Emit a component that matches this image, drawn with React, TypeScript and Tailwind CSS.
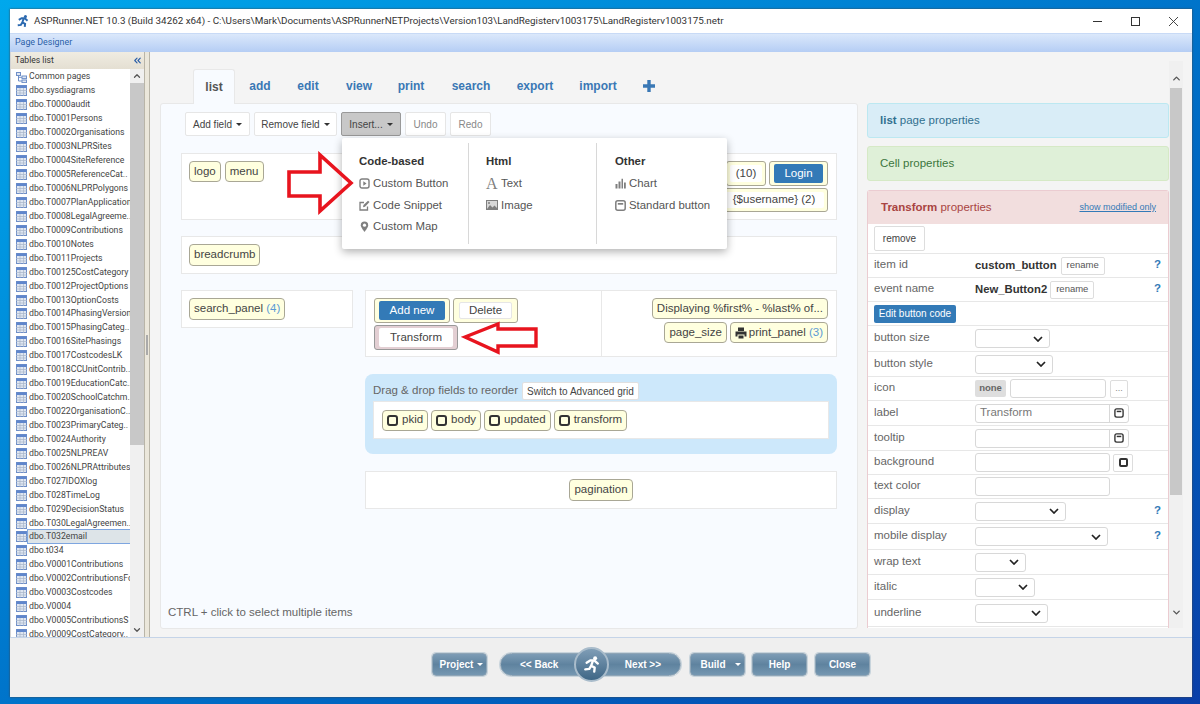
import React from "react";
import { ChevronUp, ChevronDown, ChevronsLeft } from "lucide-react";

const tables = ["dbo.sysdiagrams","dbo.T0000audit","dbo.T0001Persons","dbo.T0002Organisations","dbo.T0003NLPRSites","dbo.T0004SiteReference","dbo.T0005ReferenceCat..","dbo.T0006NLPRPolygons","dbo.T0007PlanApplication","dbo.T0008LegalAgreeme..","dbo.T0009Contributions","dbo.T0010Notes","dbo.T0011Projects","dbo.T00125CostCategory","dbo.T0012ProjectOptions","dbo.T0013OptionCosts","dbo.T0014PhasingVersion","dbo.T0015PhasingCateg..","dbo.T0016SitePhasings","dbo.T0017CostcodesLK","dbo.T0018CCUnitContrib..","dbo.T0019EducationCatc..","dbo.T0020SchoolCatchm..","dbo.T0022OrganisationC..","dbo.T0023PrimaryCateg..","dbo.T0024Authority","dbo.T0025NLPREAV","dbo.T0026NLPRAttributes","dbo.T027IDOXlog","dbo.T028TimeLog","dbo.T029DecisionStatus","dbo.T030LegalAgreemen..","dbo.T032email","dbo.t034","dbo.V0001Contributions","dbo.V0002ContributionsFo","dbo.V0003Costcodes","dbo.V0004","dbo.V0005ContributionsS","dbo.V0009CostCategory.."];

const Runner = ({ className = "", fill = "#fff" }: { className?: string; fill?: string }) => (
  <svg viewBox="0 0 20 20" className={className}>
    <circle cx="13.5" cy="3.5" r="2.2" fill={fill} />
    <path d="M4 8.5 L8 6 L12.5 6 L16.5 9.5 M11 6.5 L9 12 L13 14 L12.5 18.5 M9 12 L7 15.5 L2.5 16" stroke={fill} strokeWidth="2.6" fill="none" strokeLinejoin="round" strokeLinecap="round" />
  </svg>
);

const TableIcon = () => (
  <svg viewBox="0 0 11 11" className="w-[11px] h-[11px] shrink-0">
    <rect x="0.5" y="0.5" width="10" height="10" fill="#dfe6f2" stroke="#6f8fc8" />
    <rect x="0.5" y="0.5" width="10" height="2.5" fill="#5f86cc" />
    <path d="M0 5.5H11M0 8H11M4 3V11M7.5 3V11" stroke="#a8b4c8" strokeWidth="0.7" />
  </svg>
);

const Chip = ({ children }: { children: React.ReactNode }) => (
  <span className="inline-flex items-center h-[21px] px-1 rounded-[4px] border border-[#a9a795] bg-[#ffffdf] text-[11.5px] text-[#444] whitespace-nowrap">{children}</span>
);

const TallChip = ({ children }: { children: React.ReactNode }) => (
  <span className="inline-flex items-center h-[22px] px-1 rounded-[4px] border border-[#a9a795] bg-[#ffffdf] text-[11.5px] text-[#444] whitespace-nowrap">{children}</span>
);

const FieldIcon = () => <span className="inline-block w-[11px] h-[11px] rounded-[3px] border-2 border-[#333] mr-[4px]" />;

const Toolbar = ({ children, muted, w }: { children: React.ReactNode; muted?: boolean; w: string }) => (
  <button className={`${w} h-6 rounded-[2px] border border-[#e6e6e6] bg-white text-[10px] ${muted ? "text-[#888]" : "text-[#444]"}`}>{children}</button>
);

const Caret = () => <span className="inline-block ml-1 align-middle border-x-[3px] border-x-transparent border-t-[3px] border-t-[#333]" />;

const MenuIcon = ({ kind }: { kind: string }) => {
  const c = "#7f7f7f";
  const cls = "w-[11px] h-[11px] shrink-0";
  if (kind === "play") return <svg viewBox="0 0 11 11" className={cls}><rect x="1" y="1" width="9" height="9" rx="2" fill="none" stroke={c} strokeWidth="1.4" /><path d="M4.3 3.3L7.5 5.5L4.3 7.7Z" fill={c} /></svg>;
  if (kind === "edit") return <svg viewBox="0 0 11 11" className={cls}><path d="M8.5 6.5V10H1V2.5H5" fill="none" stroke={c} strokeWidth="1.3" /><path d="M4 7.2L4.5 5L9 0.7L10.5 2L6 6.7Z" fill={c} /></svg>;
  if (kind === "pin") return <svg viewBox="0 0 11 11" className={cls}><path d="M5.5 0.5A3.7 3.7 0 0 1 9.2 4.2C9.2 6.5 5.5 10.8 5.5 10.8C5.5 10.8 1.8 6.5 1.8 4.2A3.7 3.7 0 0 1 5.5 0.5Z" fill={c} /><circle cx="5.5" cy="4.2" r="1.6" fill="#fff" /></svg>;
  if (kind === "chart") return <svg viewBox="0 0 11 11" className={cls}><path d="M0.5 6H2.5V10.5H0.5ZM3.5 3.5H5.5V10.5H3.5ZM6.5 0.8H8V10.5H6.5ZM9 4.5H10.8V10.5H9Z" fill={c} /></svg>;
  if (kind === "image") return <svg viewBox="0 0 12 10" className="w-3 h-[10px] shrink-0"><rect width="12" height="10" fill={c} /><rect x="1" y="1" width="10" height="8" fill="#d8d8d8" /><path d="M1 9L4 5L6.5 7.5L8.5 5.5L11 8V9Z" fill={c} /><circle cx="3" cy="3" r="1" fill={c} /></svg>;
  return <svg viewBox="0 0 11 11" className={cls}><rect x="0.8" y="0.8" width="9.4" height="9.4" rx="2" fill="none" stroke={c} strokeWidth="1.5" /><rect x="2.8" y="3" width="5.4" height="1.7" fill={c} /></svg>;
};

const MenuItem = ({ kind, children }: { kind: string; children: React.ReactNode }) => (
  <div className="h-[21.5px] flex items-center gap-[3px] text-[11.4px] text-[#555] whitespace-nowrap">
    {kind === "A" ? <span className="w-[12px] font-['Liberation_Serif',serif] text-[16px] leading-none text-[#7f7f7f]">A</span> : <MenuIcon kind={kind} />}
    {children}
  </div>
);

const Sel = ({ w }: { w: string }) => (
  <span className={`${w} h-[19px] rounded-[3px] border border-[#d8d8d8] bg-white flex items-center justify-end pr-[6px]`}>
    <svg viewBox="0 0 10 6" className="w-[10px] h-[6px]"><path d="M1 1L5 5L9 1" stroke="#222" strokeWidth="1.7" fill="none" /></svg>
  </span>
);

const BtnIcon = () => (
  <svg viewBox="0 0 11 11" className="w-[10px] h-[10px]"><rect x="1" y="1" width="9" height="9" rx="2" fill="none" stroke="#333" strokeWidth="1.5" /><rect x="3" y="3" width="5" height="1.6" fill="#333" /></svg>
);

const Row = ({ label, h, children, help }: { label: string; h: string; children?: React.ReactNode; help?: boolean }) => (
  <div className={`${h} shrink-0 border-b border-[#e7e7e7] flex items-center pl-[6px] pr-[7px] text-[#666]`}>
    <span className="w-[101px] text-[11.5px] shrink-0 -mt-[1px]">{label}</span>
    <div className="flex-1 flex items-center">{children}</div>
    {help && <span className="text-[11.5px] font-bold text-[#337ab7] -mt-[1px]">?</span>}
  </div>
);

const Small = ({ children }: { children: React.ReactNode }) => (
  <span className="h-[18px] px-[5px] rounded-[2px] border border-[#ddd] bg-white text-[9.5px] text-[#555] flex items-center">{children}</span>
);

const Input = ({ w, children, addon }: { w: string; children?: React.ReactNode; addon?: boolean }) => (
  <span className={`${w} h-[19px] rounded-[3px] border border-[#d8d8d8] bg-white flex items-center text-[11.5px] text-[#777]`}>
    <span className="pl-[4px] flex-1">{children}</span>
    {addon && <span className="w-[19px] h-full border-l border-[#d8d8d8] flex items-center justify-center"><BtnIcon /></span>}
  </span>
);

const NavBtn = ({ children, caret, w, extra = "" }: { children: React.ReactNode; caret?: boolean; w: string; extra?: string }) => (
  <button className={`${w} ${extra} h-[23px] rounded-[4px] border border-[#8fa5b6] bg-gradient-to-b from-[#7d9cb5] via-[#5f839f] to-[#7597b1] text-white font-bold text-[10px] relative shadow-[0_0_0_1px_#c8d4dc]`}>
    {children}
    {caret && <span className="absolute right-[3px] top-[9px] border-x-[3px] border-x-transparent border-t-[3px] border-t-white" />}
  </button>
);

export default function App() {
  return (
    <div className="w-[1200px] h-[704px] overflow-hidden bg-gradient-to-br from-[#00a8ec] to-[#0a3fa8] pt-[9px] pl-[10px] font-['Liberation_Sans',sans-serif]">
      <div className="w-[1182px] h-[688px] bg-[#efefef] flex flex-col shadow-[0_0_2px_#444] relative">
        {/* title bar */}
        <div className="h-[24px] bg-white flex items-center pl-[6px] shrink-0 text-[#333]">
          <svg viewBox="0 0 20 20" className="w-[14px] h-[14px]"><circle cx="13.5" cy="3.5" r="2.2" fill="#2c6ab0" /><path d="M4 8.5 L8 6 L12.5 6 L16.5 9.5 M11 6.5 L9 12 L13 14 L12.5 18.5 M9 12 L7 15.5 L2.5 16" stroke="#2c6ab0" strokeWidth="2.8" fill="none" /></svg>
          <span className="ml-[4px] text-[9.85px] whitespace-nowrap font-['Roboto',sans-serif]">ASPRunner.NET 10.3 (Build 34262 x64) - C:\Users\Mark\Documents\ASPRunnerNETProjects\Version103\LandRegisterv1003175\LandRegisterv1003175.netr</span>
          <div className="ml-auto flex items-center">
            <span className="w-[38px] flex justify-center"><span className="w-[9px] h-px bg-[#333]" /></span>
            <span className="w-[38px] flex justify-center"><span className="w-[9px] h-[9px] border border-[#333]" /></span>
            <span className="w-[38px] flex justify-center">
              <svg viewBox="0 0 10 10" className="w-[9px] h-[9px]"><path d="M0 0L10 10M10 0L0 10" stroke="#333" strokeWidth="1" /></svg>
            </span>
          </div>
        </div>
        <div className="h-[19px] shrink-0 bg-gradient-to-b from-[#dbe8fb] to-[#b5cdf4] border-t border-[#c8daf6] flex items-center pl-[5px] text-[8.9px] text-[#2a5ea8] font-['Roboto',sans-serif]">Page Designer</div>
        <div className="flex-1 flex min-h-0">
          {/* tables list */}
          <div className="w-[134px] shrink-0 flex flex-col bg-white border-l border-[#d4d4d4] font-['Roboto',sans-serif]">
            <div className="h-[17px] shrink-0 bg-gradient-to-b from-[#f0ece2] to-[#e4dfd2] flex items-center pl-1 text-[8.6px] text-[#333]">
              Tables list
              <ChevronsLeft className="ml-auto mr-[1px] w-[11px] h-[11px] text-[#2a5ea8]" strokeWidth={2.5} />
            </div>
            <div className="flex-1 flex min-h-0">
              <div className="flex-1 overflow-hidden min-w-0 pl-[5px] pt-px">
                <div className="h-[14px] flex items-center gap-[1px] text-[8.7px] text-[#444]">
                  <svg viewBox="0 0 11 11" className="w-[11px] h-[11px] shrink-0"><rect x="0.5" y="0.5" width="4" height="3" fill="#dfe6f2" stroke="#6f8fc8" /><rect x="6" y="4" width="4.5" height="2.6" fill="#dfe6f2" stroke="#6f8fc8" /><rect x="6" y="8" width="4.5" height="2.6" fill="#dfe6f2" stroke="#6f8fc8" /><path d="M2.5 3.5V9H6M2.5 5.3H6" stroke="#6f8fc8" fill="none" /></svg>
                  <span className="pl-px">Common pages</span>
                </div>
                {tables.map((t) => (
                  <div key={t} className="h-[13.94px] flex items-center gap-[1px] text-[8.7px] text-[#444] whitespace-nowrap">
                    <TableIcon />
                    <span className={`h-[13px] flex-1 pl-[1px] leading-[13px] overflow-hidden ${t === "dbo.T032email" ? "bg-[#dde4e8] outline-1 outline-[#7ea6e0]" : ""}`}>{t}</span>
                  </div>
                ))}
              </div>
              <div className="w-[14px] shrink-0 bg-[#f0f0f0] flex flex-col">
                <div className="h-[14px] flex items-center justify-center"><ChevronUp className="w-[10px] h-[10px] text-[#555]" strokeWidth={3} /></div>
                <div className="flex-1 flex flex-col"><div className="h-[362px] bg-[#c8c8c8]" /></div>
                <div className="h-[14px] flex items-center justify-center"><ChevronDown className="w-[10px] h-[10px] text-[#555]" strokeWidth={3} /></div>
              </div>
            </div>
          </div>
          {/* splitter */}
          <div className="w-[6px] shrink-0 bg-[#ebe7db] border-x border-[#b9b5a8] flex items-center justify-center">
            <span className="w-[2px] h-[20px] bg-[#aaa]" />
          </div>
          {/* designer */}
          <div className="w-[1042px] shrink-0 bg-[#f4f4f4] flex min-h-0">
            <div className="w-[717px] shrink-0 flex flex-col pl-[10px] pt-[17px]">
              <div className="h-[35px] flex items-end pl-[33px] text-[12px] font-bold text-[#3a78b5] relative z-10 -mb-px">
                <span className="h-[35px] w-[42px] flex items-center justify-center bg-[#f8fbff] border border-b-0 border-[#e8e8e8] rounded-t-[3px] text-[#555]">list</span>
                <span className="w-[50px] text-center pb-[9px]">add</span>
                <span className="w-[46px] text-center pb-[9px]">edit</span>
                <span className="w-[56px] text-center pb-[9px]">view</span>
                <span className="w-[48px] text-center pb-[9px]">print</span>
                <span className="w-[72px] text-center pb-[9px]">search</span>
                <span className="w-[56px] text-center pb-[9px]">export</span>
                <span className="w-[70px] text-center pb-[9px]">import</span>
                <span className="w-[32px] flex justify-center pb-[12px]">
                  <svg viewBox="0 0 12 12" className="w-3 h-3"><path d="M6 0V12M0 6H12" stroke="#3a78b5" strokeWidth="3.4" /></svg>
                </span>
              </div>
              <div className="w-[698px] h-[526px] bg-[#f8fbff] border border-[#e8e8e8] rounded-[3px] relative">
                <div className="flex items-center gap-[4px] pl-[24px] pt-[8px]">
                  <Toolbar w="w-[65px]">Add field<Caret /></Toolbar>
                  <Toolbar w="w-[83px]">Remove field<Caret /></Toolbar>
                  <button className="w-[60px] h-6 rounded-[2px] border border-[#999] bg-[#c8c8c8] text-[10px] text-[#444]">Insert...<Caret /></button>
                  <Toolbar w="w-[41px]" muted>Undo</Toolbar>
                  <Toolbar w="w-[41px]" muted>Redo</Toolbar>
                </div>
                <div className="mx-[20px] mt-[17px] flex flex-col">
                  {/* header */}
                  <div className="h-[67px] bg-white border border-[#e8e8e8] flex justify-between pl-[7px] pr-[8px] pt-[7px]">
                    <div className="flex gap-[4px]"><Chip>logo</Chip><Chip>menu</Chip></div>
                    <div className="flex flex-col items-end gap-[2px]">
                      <div className="flex gap-[3px]">
                        <span className="h-[25px] w-[40px] flex items-center justify-center rounded-[3px] border border-[#a9a795] bg-[#ffffdf] p-[3px]"><span className="w-full h-full bg-white rounded-[2px] flex items-center justify-center text-[11.5px] text-[#444]">(10)</span></span>
                        <span className="h-[25px] w-[59px] flex items-center rounded-[3px] border border-[#a9a795] bg-[#ffffdf] px-[4px] py-[2px]"><span className="w-full h-full bg-[#337ab7] rounded-[2px] flex items-center justify-center text-[11.5px] text-white">Login</span></span>
                      </div>
                      <span className="h-[24px] w-[108px] flex items-center rounded-[3px] border border-[#a9a795] bg-[#ffffdf] p-[3px]"><span className="w-full h-full bg-white rounded-[2px] flex items-center justify-center text-[11.5px] text-[#444]">{"{$username} (2)"}</span></span>
                    </div>
                  </div>
                  <div className="h-[38px] mt-[16px] bg-white border border-[#e8e8e8] flex items-center pl-[7px]"><TallChip>breadcrumb</TallChip></div>
                  <div className="flex mt-[16px] gap-[12px]">
                    <div className="w-[172px] h-[38px] bg-white border border-[#e8e8e8] flex items-center pl-[7px] shrink-0"><TallChip>search_panel&nbsp;<span className="text-[#5b9bd5]">(4)</span></TallChip></div>
                    <div className="flex-1 flex flex-col">
                      <div className="h-[67px] bg-white border border-[#e8e8e8] flex">
                        <div className="w-[236px] border-r border-[#e8e8e8] pl-[8px] pt-[7px]">
                          <div className="flex gap-[3px]">
                            <span className="h-[25px] w-[76px] flex rounded-[3px] border border-[#a9a795] bg-[#ffffdf] px-[4px] py-[2px]"><span className="w-full h-full bg-[#337ab7] rounded-[2px] flex items-center justify-center text-[11.5px] text-white">Add new</span></span>
                            <span className="h-[25px] w-[65px] flex rounded-[3px] border border-[#a9a795] bg-[#ffffdf] px-[5px] py-[3px]"><span className="w-full h-full bg-white border border-[#e6e6e6] rounded-[2px] flex items-center justify-center text-[11.5px] text-[#444]">Delete</span></span>
                          </div>
                          <span className="mt-[2px] h-[25px] w-[84px] flex rounded-[3px] border border-[#999] bg-[#e3cfd3] px-[4px] py-[2px]"><span className="w-full h-full bg-white rounded-[2px] flex items-center justify-center text-[11.5px] text-[#444]">Transform</span></span>
                        </div>
                        <div className="flex-1 flex flex-col items-end pr-[8px] pt-[7px] gap-[3px]">
                          <Chip>Displaying %first% - %last% of...</Chip>
                          <div className="flex gap-[3px]">
                            <Chip>page_size</Chip>
                            <Chip>
                              <svg viewBox="0 0 12 12" className="w-3 h-3 mr-[2px]"><path d="M3 0.5H9V4H3ZM0.5 4.5H11.5V9.5H9.5V7.5H2.5V9.5H0.5ZM3.5 8.5H8.5V11.5H3.5Z" fill="#333" /></svg>
                              print_panel&nbsp;<span className="text-[#5b9bd5]">(3)</span>
                            </Chip>
                          </div>
                        </div>
                      </div>
                      <div className="h-[80px] mt-[17px] rounded-[8px] bg-[#cde8fb] px-[8px] pt-[8px]">
                        <div className="h-[18px] flex items-center gap-1 text-[11.5px] text-[#666]">Drag &amp; drop fields to reorder<span className="h-[18px] px-1 bg-white rounded-[2px] border border-[#e0e0e0] text-[10px] text-[#444] flex items-center">Switch to Advanced grid</span></div>
                        <div className="h-[38px] mt-px bg-white border border-[#e8e8e8] flex items-center gap-[3px] pl-[8px]">
                          {["pkid", "body", "updated", "transform"].map((f) => <Chip key={f}><FieldIcon />{f}</Chip>)}
                        </div>
                      </div>
                      <div className="h-[38px] mt-[17px] bg-white border border-[#e8e8e8] flex items-center justify-center"><TallChip>pagination</TallChip></div>
                    </div>
                  </div>
                </div>
                <div className="absolute left-[7px] bottom-[7px] text-[11.5px] text-[#666]">CTRL + click to select multiple items</div>
                {/* overlays */}
                <div className="absolute left-[181px] top-[34px] w-[385px] h-[111px] bg-white rounded-[2px] shadow-[0_3px_8px_rgba(0,0,0,0.3)] flex py-[5px] z-20">
                  <div className="w-[127px] border-r border-[#d8d8d8] pl-[17px] pt-[10px]">
                    <div className="text-[11.4px] font-bold text-[#333] mb-[3px]">Code-based</div>
                    <MenuItem kind="play">Custom Button</MenuItem>
                    <MenuItem kind="edit">Code Snippet</MenuItem>
                    <MenuItem kind="pin">Custom Map</MenuItem>
                  </div>
                  <div className="w-[128px] border-r border-[#d8d8d8] pl-[17px] pt-[10px]">
                    <div className="text-[11.4px] font-bold text-[#333] mb-[3px]">Html</div>
                    <MenuItem kind="A">Text</MenuItem>
                    <MenuItem kind="image">Image</MenuItem>
                  </div>
                  <div className="flex-1 pl-[18px] pt-[10px]">
                    <div className="text-[11.4px] font-bold text-[#333] mb-[3px]">Other</div>
                    <MenuItem kind="chart">Chart</MenuItem>
                    <MenuItem kind="std">Standard button</MenuItem>
                  </div>
                </div>
                <svg className="absolute left-[125px] top-[47px] w-[68px] h-[64px] z-30" viewBox="286 151 68 64">
                  <polygon points="289,172 320,172 320,155 351,183 320,211 320,196 289,196" fill="none" stroke="#e8141e" strokeWidth="3.6" />
                </svg>
                <svg className="absolute left-[300px] top-[217px] w-[78px] h-[36px] z-30" viewBox="461 321 78 36">
                  <polygon points="465,337 498,324 498,329 536,329 536,346 498,346 498,352" fill="none" stroke="#e8141e" strokeWidth="3.4" />
                </svg>
              </div>
            </div>
            {/* properties */}
            <div className="w-[302px] shrink-0 flex flex-col pt-[51px] pb-[9px] text-[#555] min-h-0">
              <div className="h-[35px] shrink-0 rounded-[3px] bg-[#d9edf7] border border-[#bce8f1] flex items-center pl-[12px] text-[11.5px] text-[#31708f]"><b>list</b>&nbsp;page properties</div>
              <div className="h-[35px] shrink-0 mt-[8px] rounded-[3px] bg-[#dff0d8] border border-[#d6e9c6] flex items-center pl-[12px] text-[11.5px] text-[#3c763d]">Cell properties</div>
              <div className="mt-[9px] flex-1 min-h-0 flex flex-col border-x border-[#ebccd1] rounded-t-[3px] overflow-hidden bg-white">
                <div className="h-[34px] shrink-0 bg-[#f2dede] border-t border-[#ebccd1] flex items-center pl-[13px] pr-[12px] text-[11.5px] text-[#a94442]">
                  <b>Transform</b>&nbsp;properties
                  <span className="ml-auto text-[9px] text-[#337ab7] underline">show modified only</span>
                </div>
                <div className="h-[30px] shrink-0 border-b border-[#e7e7e7] flex items-center pl-[6px]">
                  <span className="h-[25px] w-[51px] rounded-[2px] border border-[#ddd] flex items-center justify-center text-[10px] text-[#444]">remove</span>
                </div>
                <Row label="item id" h="h-[24px]" help><b className="text-[11.3px] text-[#333] mr-[4px]">custom_button</b><Small>rename</Small></Row>
                <Row label="event name" h="h-[24px]" help><b className="text-[11.3px] text-[#333] mr-[3px]">New_Button2</b><Small>rename</Small></Row>
                <div className="h-[24px] shrink-0 border-b border-[#e7e7e7] flex items-center pl-[6px]"><span className="h-[18px] w-[82px] bg-[#337ab7] rounded-[2px] text-[10px] text-white flex items-center justify-center">Edit button code</span></div>
                <Row label="button size" h="h-[26px]"><Sel w="w-[75px]" /></Row>
                <Row label="button style" h="h-[25px]"><Sel w="w-[78px]" /></Row>
                <Row label="icon" h="h-[24px]">
                  <span className="h-[17px] w-[31px] bg-[#dedede] rounded-[2px] text-[9.5px] font-bold text-[#666] flex items-center justify-center mr-[4px]">none</span>
                  <Input w="w-[96px]" />
                  <span className="ml-[4px] w-[18px] h-[18px] border border-[#ddd] rounded-[2px] text-[9px] text-[#888] flex items-center justify-center">...</span>
                </Row>
                <Row label="label" h="h-[25px]"><Input w="w-[154px]" addon>Transform</Input></Row>
                <Row label="tooltip" h="h-[25px]"><Input w="w-[154px]" addon /></Row>
                <Row label="background" h="h-[24px]">
                  <Input w="w-[135px]" />
                  <span className="ml-[3px] w-[20px] h-[18px] border border-[#ddd] rounded-[2px] flex items-center justify-center"><span className="w-[9px] h-[9px] rounded-[2px] border-2 border-[#333]" /></span>
                </Row>
                <Row label="text color" h="h-[24px]"><Input w="w-[135px]" /></Row>
                <Row label="display" h="h-[25px]" help><Sel w="w-[91px]" /></Row>
                <Row label="mobile display" h="h-[26px]" help><Sel w="w-[133px]" /></Row>
                <Row label="wrap text" h="h-[25px]"><Sel w="w-[51px]" /></Row>
                <Row label="italic" h="h-[25px]"><Sel w="w-[60px]" /></Row>
                <Row label="underline" h="h-[27px]"><Sel w="w-[73px]" /></Row>
              </div>
            </div>
            {/* outer scrollbar */}
            <div className="w-[14px] shrink-0 my-[9px] bg-[#f0f0f0] flex flex-col">
              <div className="h-[27px] flex items-center justify-center pt-[8px]"><ChevronUp className="w-[11px] h-[11px] text-[#555]" strokeWidth={3} /></div>
              <div className="h-[407px] mx-px bg-[#c8c8c8]" />
              <div className="flex-1" />
              <div className="h-[32px] flex items-center justify-center"><ChevronDown className="w-[11px] h-[11px] text-[#555]" strokeWidth={3} /></div>
            </div>
          </div>
        </div>
        {/* footer */}
        <div className="h-[60px] shrink-0 bg-[#efefef] border-t border-[#c5d4e8] flex items-center pl-[422px] pb-[7px]">
          <NavBtn w="w-[55px]" extra="pr-[6px]" caret>Project</NavBtn>
          <div className="relative w-[181px] h-[23px] ml-[13px] rounded-full border border-[#8fa5b6] bg-gradient-to-b from-[#7d9cb5] via-[#5f839f] to-[#7597b1] text-white font-bold text-[10px] flex items-center justify-between pl-[19px] pr-[19px] shadow-[0_0_0_1px_#c8d4dc]">
            <span>&lt;&lt; Back</span>
            <span>Next &gt;&gt;</span>
            <span className="absolute left-[73px] -top-[7px] w-[35px] h-[35px] rounded-full bg-gradient-to-b from-[#7f9db6] to-[#3f6786] border-2 border-[#a9bccb] flex items-center justify-center">
              <Runner className="w-[18px] h-[18px]" />
            </span>
          </div>
          <NavBtn w="w-[55px]" extra="ml-[9px] pr-[9px]" caret>Build</NavBtn>
          <NavBtn w="w-[55px]" extra="ml-[7px]">Help</NavBtn>
          <NavBtn w="w-[55px]" extra="ml-[8px]">Close</NavBtn>
        </div>
      </div>
    </div>
  );
}
